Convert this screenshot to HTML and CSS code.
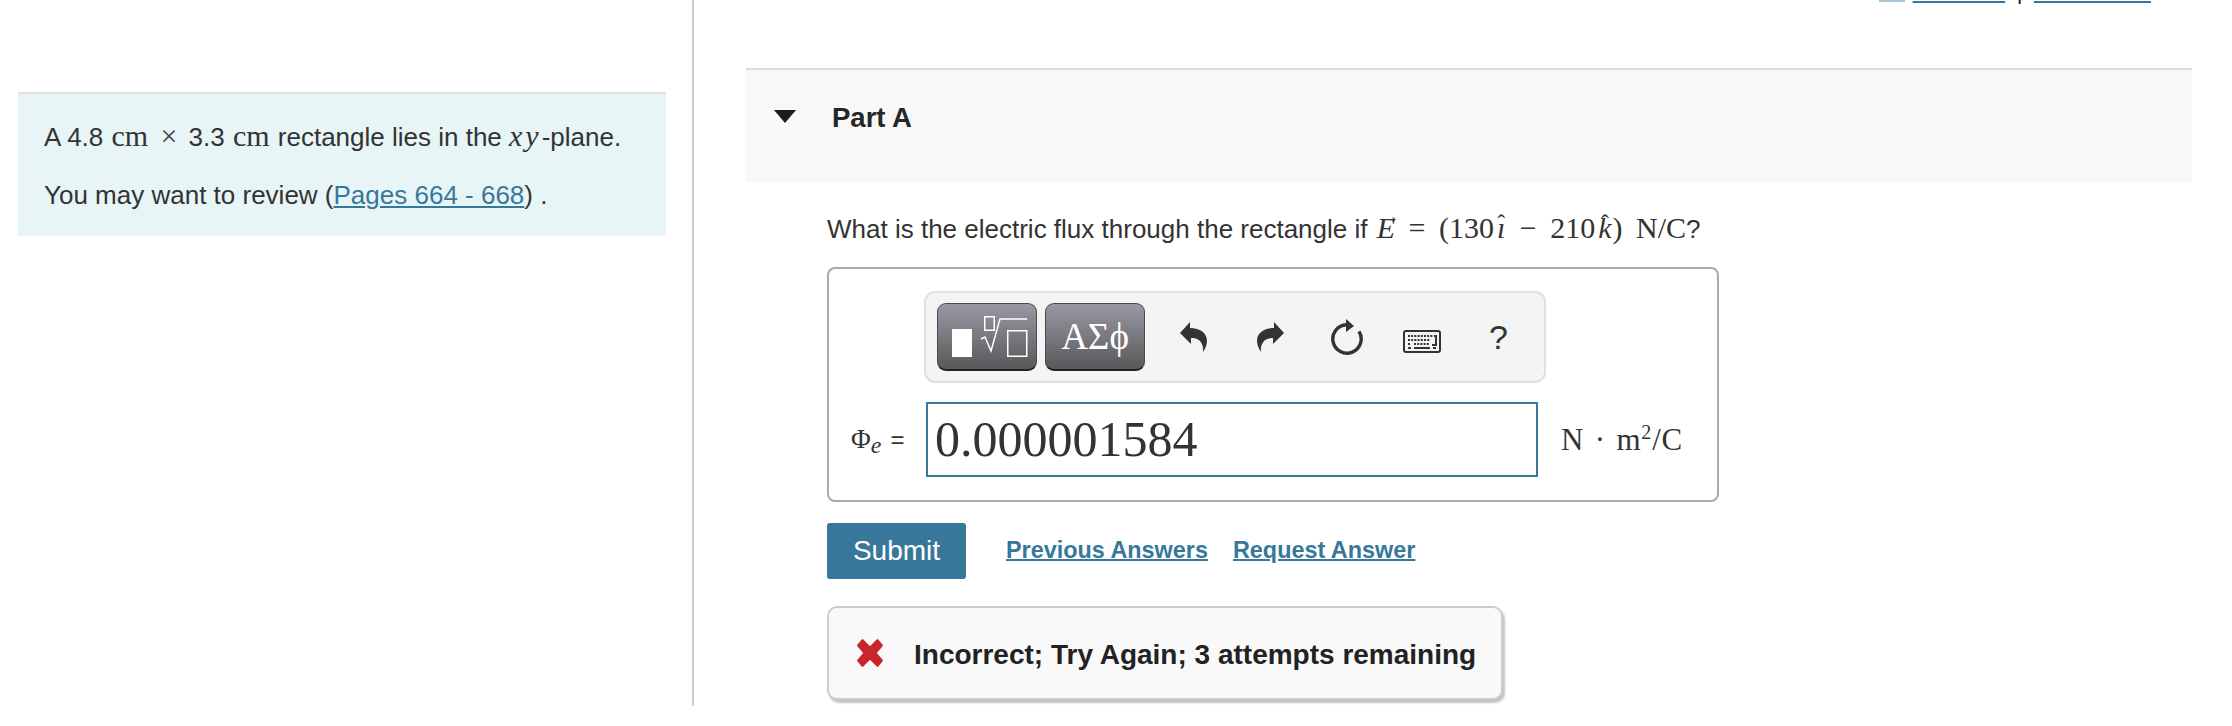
FILE: index.html
```html
<!DOCTYPE html>
<html lang="en">
<head>
<meta charset="utf-8">
<title>Part A</title>
<link rel="stylesheet" href="styles.css">
</head>
<body>
<div class="page">
  <aside class="side">
    <div class="intro">
      <p>A 4.8 <span class="m cm">cm</span> <span class="m times">×</span> 3.3 <span class="m cm">cm</span> rectangle lies in the <i class="m xy">xy</i>-plane.</p>
      <p>You may want to review (<a href="#">Pages 664 - 668</a>) .</p>
    </div>
  </aside>
  <main class="main">
    <nav class="toplinks">
      <svg class="toplinks-icon" width="26" height="16" viewBox="0 0 26 16"><rect width="26" height="16" fill="#a9c6d6"/></svg>
      <a href="#">&nbsp;Review</a><span class="sep">|</span><a href="#">Constants</a>
    </nav>
    <section class="part">
      <header class="part-head">
        <svg class="caret" width="22" height="13" viewBox="0 0 22 13"><path d="M0 0H22L11 13Z" fill="#1c1c1c"/></svg>
        <h2>Part A</h2>
      </header>
      <div class="part-body">
        <p class="question">What is the electric flux through the rectangle if <span class="m eq"><span class="vec"><i>E</i><span class="arrow">→</span></span> = (130<span class="hat"><i>ı</i><span class="caron">ˆ</span></span> − 210<span class="hat"><i>k</i><span class="caron">ˆ</span></span>) N/C</span>?</p>
        <div class="answer">
          <div class="toolbar">
            <button class="tool" type="button" aria-label="Templates">
              <svg width="98" height="65" viewBox="1 1 98 65" fill="none" stroke="#fff">
                <rect x="15" y="26" width="20" height="28" fill="#fff" stroke="none"/>
                <rect x="47.75" y="13.75" width="9.5" height="13.5" stroke-width="1.5"/>
                <path d="M44 36l4-2 6 14 9-32h27" stroke-width="1.5"/>
                <rect x="70.75" y="27.75" width="19" height="25.5" stroke-width="1.5"/>
              </svg>
            </button>
            <button class="tool greek" type="button">ΑΣϕ</button>
            <div class="actions">
              <svg class="act" width="27" height="30" viewBox="0 0 27 30"><path d="M0 11 10 0V6C20 6 27 11 27 19 27 23 25 27 23 30 23.5 24 22 16 11 16V22Z" fill="#333"/></svg>
              <svg class="act" width="27" height="30" viewBox="0 0 27 30"><path d="M27 11 17 0V6C7 6 0 11 0 19 0 23 2 27 4 30 3.5 24 5 16 16 16V22Z" fill="#333"/></svg>
              <svg class="act" width="32" height="36" viewBox="0 0 32 36" fill="none"><path d="M15.5 5.8A14.2 14.2 0 1 0 28 12.4" stroke="#333" stroke-width="3.4"/><path d="M15 0 23 7 15 13Z" fill="#333"/></svg>
              <svg class="act kbd" width="38" height="23" viewBox="0 0 38 23" fill="none"><rect x="1" y="1" width="36" height="21" rx="2" stroke="#333" stroke-width="2"/><path d="M5 6h25M5 10h22M5 14h3M11 14h16" stroke="#333" stroke-width="2" stroke-dasharray="2 1.2"/><path d="M31 6h2v9H29M5 18h3M11 18h16M30 18h3" stroke="#333" stroke-width="2"/></svg>
              <span class="help">?</span>
            </div>
          </div>
          <div class="entry">
            <span class="label"><span class="phi">Φ<i>e</i></span><span class="eqs">=</span></span>
            <div class="input">0.000001584</div>
            <span class="unit">N · m<sup>2</sup>/C</span>
          </div>
        </div>
        <div class="controls">
          <button class="submit" type="button">Submit</button>
          <a class="ctl" href="#">Previous Answers</a>
          <a class="ctl" href="#">Request Answer</a>
        </div>
        <div class="feedback">
          <svg width="30" height="28" viewBox="0 0 28 26"><path d="M3 6 7 1 14 8 21 1 25 6 19 13 25 20 21 25 14 18 7 25 3 20 9 13Z" fill="#c9252b" stroke="#c9252b" stroke-width="2" stroke-linejoin="round"/></svg>
          <strong>Incorrect; Try Again; 3 attempts remaining</strong>
        </div>
      </div>
    </section>
  </main>
</div>
</body>
</html>
```

FILE: styles.css
```css
* { box-sizing: border-box; }
html, body { margin: 0; background: #fff; }
body { font-family: "Liberation Sans", Arial, sans-serif; color: #333; overflow: hidden; }
a { color: #37789a; }
p { margin: 0; }
.page { display: flex; height: 726px; width: 2232px; align-items: flex-start; }
.side { width: 694px; height: 706px; border-right: 2px solid #c3d1de; padding: 92px 26px 0 18px; flex: none; }
.intro { background: #e7f5f7; border-top: 2px solid #dfe1e2; height: 144px; padding: 13px 26px 0; font-size: 26px; line-height: 58px; white-space: nowrap; }
.m { font-family: "Liberation Serif", "Times New Roman", serif; font-size: 30px; }
.cm { margin: 0 1px; }
.times { margin: 0 4px; color: #444; }
.xy { letter-spacing: 3px; }
.main { flex: 1; padding: 0 40px 0 52px; }
.toplinks { height: 5px; overflow: hidden; display: flex; justify-content: flex-end; align-items: flex-end; font-size: 26px; line-height: 30px; padding-right: 41px; margin-bottom: 63px; }
.toplinks a { text-decoration-thickness: 2px; text-underline-offset: 2px; }
.toplinks-icon { margin: 0 8px 3px 0; }
.sep { margin: 0 11px; }
.part-head { height: 114px; background: #f8f8f8; border-top: 2px solid #dcdcdc; display: flex; align-items: flex-start; padding: 40px 0 0 28px; }
.caret { flex: none; }
.part-head h2 { margin: -12px 0 0 36px; font-size: 27.5px; line-height: 40px; font-weight: bold; color: #262626; }
.part-body { padding: 0 0 0 81px; }
.question { font-size: 26px; line-height: 40px; margin: 26px 0 0; height: 59px; white-space: nowrap; }
.eq { font-size: 30px; word-spacing: 6px; margin-left: 2px; }
.vec { position: relative; display: inline-block; }
.arrow { position: absolute; left: 3px; top: -12px; font-size: 20px; font-style: normal; }
.hat { position: relative; display: inline-block; margin: 0 1px 0 3px; }
.caron { position: absolute; left: 0; right: 0; top: -5px; text-align: center; font-size: 24px; }
.answer { width: 892px; height: 235px; border: 2px solid #aaa; border-radius: 8px; padding: 22px 0 0 95px; }
.toolbar { width: 622px; height: 92px; border: 2px solid #e0e0e0; border-radius: 11px; background: #f4f4f4; display: flex; align-items: flex-start; padding: 10px 0 0 11px; gap: 8px; }
.tool { width: 100px; height: 68px; padding: 0; border: 1px solid #4a4a4a; border-bottom: 2px solid #222; border-radius: 9px; background: linear-gradient(#9a99a3, #58585a); display: flex; align-items: center; justify-content: center; color: #fff; }
.greek { font-family: "Liberation Serif", serif; font-size: 37px; }
.actions { display: flex; align-items: center; height: 68px; flex: 1; }
.act { flex: none; }
.actions .act:nth-child(1) { margin-left: 27px; }
.actions .act:nth-child(2) { margin-left: 50px; }
.actions .act:nth-child(3) { margin-left: 47px; }
.actions .act:nth-child(4) { margin-left: 40px; margin-top: 9px; }
.help { margin-left: 48px; font-size: 34px; }
.entry { display: flex; align-items: center; margin: 19px 0 0 -73px; }
.label { width: 75px; display: flex; align-items: center; white-space: nowrap; }
.phi { font-family: "Liberation Serif", serif; font-size: 27px; }
.phi i { font-size: 24px; position: relative; top: 5px; }
.eqs { font-size: 24px; margin-left: 9px; }
.input { width: 612px; height: 75px; border: 2px solid #37789a; background: #fff; font-family: "Liberation Serif", serif; font-size: 50px; line-height: 71px; padding-left: 7px; color: #333; }
.unit { margin-left: 23px; font-family: "Liberation Serif", serif; font-size: 31px; letter-spacing: .8px; word-spacing: 2px; white-space: nowrap; }
.unit sup { font-size: 20px; line-height: 0; }
.controls { display: flex; align-items: center; margin-top: 21px; height: 56px; }
.submit { width: 139px; height: 56px; padding: 0; border: 0; border-radius: 3px; background: #37789a; color: #fff; font: 28px "Liberation Sans", Arial, sans-serif; margin-right: 40px; }
.ctl { font-size: 23.4px; font-weight: bold; margin-right: 25px; position: relative; top: -1px; text-decoration-thickness: 2px; }
.feedback { width: 676px; height: 94px; margin-top: 27px; border: 2px solid #ccc; border-radius: 10px; background: #f9f9f9; box-shadow: 2px 3px 2px #c4c4c4; display: flex; align-items: center; padding-left: 26px; }
.feedback strong { margin: 4px 0 0 29px; font-size: 28px; color: #222; white-space: nowrap; }
```
